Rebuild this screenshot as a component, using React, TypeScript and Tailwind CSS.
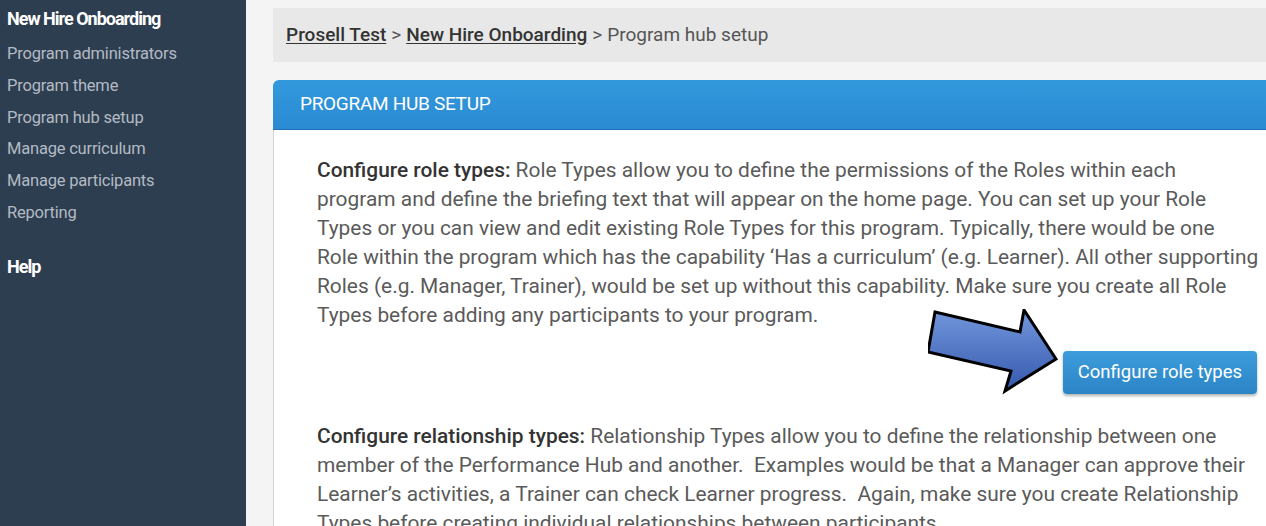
import React from 'react';

const menu = [
  'Program administrators',
  'Program theme',
  'Program hub setup',
  'Manage curriculum',
  'Manage participants',
  'Reporting',
];

function Arrow() {
  return (
    <svg width="140" height="90" viewBox="0 0 140 90" className="absolute left-[-135px] top-[-42px]">
      <defs>
        <linearGradient id="arrowFill" x1="0" y1="0" x2="0" y2="1">
          <stop offset="0" stopColor="#7297dc" />
          <stop offset="1" stopColor="#3558ad" />
        </linearGradient>
      </defs>
      <polygon
        points="7,3 92,23 96,1 128,50 77,82 83,62 0,43"
        fill="url(#arrowFill)"
        stroke="#000"
        strokeWidth="3"
        strokeLinejoin="miter"
      />
    </svg>
  );
}

export default function App() {
  return (
    <div
      className="flex h-[526px] w-[1266px] overflow-hidden bg-[#f4f4f4]"
      style={{ fontFamily: 'Roboto, "Liberation Sans", sans-serif' }}
    >
      {/* Sidebar */}
      <aside className="w-[246px] shrink-0 bg-[#2d3e50] pl-[7px] pt-[6px]">
        <h2 className="text-[18px] font-bold leading-[26px] tracking-[-1px] text-white">New Hire Onboarding</h2>
        <ul className="mt-[6px]">
          {menu.map((m) => (
            <li key={m} className="h-[31.8px] text-[16.5px] font-normal leading-[31px] tracking-[-0.2px] text-[#b3bac3]">
              {m}
            </li>
          ))}
        </ul>
        <h2 className="mt-[25px] text-[18px] font-bold leading-[26px] tracking-[-1px] text-white">Help</h2>
      </aside>

      {/* Main */}
      <main className="min-w-0 flex-1 pl-[27px] pt-[8px]">
        <div className="flex h-[54px] items-center bg-[#e8e8e8] pl-[13px] text-[19px] text-[#555]">
          <span className="font-medium text-[#333] underline underline-offset-2">Prosell Test</span>
          <span className="mx-[5px]">&gt;</span>
          <span className="font-medium text-[#333] underline underline-offset-2">New Hire Onboarding</span>
          <span className="mx-[5px]">&gt;</span>
          <span>Program hub setup</span>
        </div>

        <section className="mt-[18px] w-[1010px]">
          <div className="flex h-[50px] items-center rounded-tl-[6px] border-b border-[#1f72b8] bg-gradient-to-b from-[#3399dd] to-[#2a8ad2] pl-[27px] text-[19px] tracking-[-0.3px] text-white">
            PROGRAM HUB SETUP
          </div>
          <div className="h-[400px] border-l border-[#d4d4d4] bg-white pl-[43px] pt-[26px]">
            <div className="w-[946px] text-[20.9px] leading-[29px] text-[#5a5a5a]">
              <p>
                <span className="font-medium text-[#333]">Configure role types:</span> Role Types allow you to define the
                permissions of the Roles within each
                <br />
                program and define the briefing text that will appear on the home page. You can set up your Role
                <br />
                Types or you can view and edit existing Role Types for this program. Typically, there would be one
                <br />
                Role within the program which has the capability ‘Has a curriculum’ (e.g. Learner). All other supporting
                <br />
                Roles (e.g. Manager, Trainer), would be set up without this capability. Make sure you create all Role
                <br />
                Types before adding any participants to your program.
              </p>
              <div className="mt-[21px] flex justify-end pr-[6px]">
                <div className="relative">
                  <Arrow />
                  <button className="relative h-[43px] rounded-[4px] bg-gradient-to-b from-[#3d9ddb] to-[#2b84c6] px-[15px] text-[18.5px] font-normal text-white shadow-[0_2px_3px_rgba(0,0,0,0.3)]">
                    Configure role types
                  </button>
                </div>
              </div>
              <p className="mt-[28px]">
                <span className="font-medium text-[#333]">Configure relationship types:</span> Relationship Types allow
                you to define the relationship between one member of the Performance Hub and another.&nbsp; Examples
                would be that a Manager can approve their Learner’s activities, a Trainer can check Learner progress.&nbsp;
                Again, make sure you create Relationship Types before creating individual relationships between
                participants.
              </p>
            </div>
          </div>
        </section>
      </main>
    </div>
  );
}
